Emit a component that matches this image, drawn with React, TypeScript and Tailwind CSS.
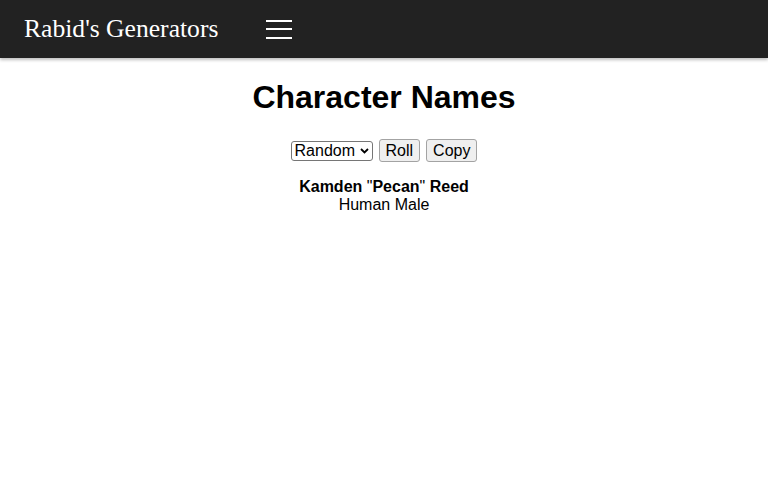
import { useState } from 'react'

export default function App() {
  const [race, setRace] = useState('Random')

  return (
    <div className="min-h-screen bg-white font-['Liberation_Sans',Arial,sans-serif] text-black">
      {/* Top bar */}
      <nav className="flex h-[58px] items-center bg-[#222222] px-6 shadow-[0_2px_3px_rgba(0,0,0,0.25)]">
        <span className="font-['Liberation_Serif','Times_New_Roman',serif] text-[25.6px] leading-none text-white">
          Rabid's Generators
        </span>
        <button className="ml-[48px] flex h-[19px] w-[26px] flex-col justify-between" aria-label="Menu">
          <span className="block h-[2px] w-full bg-white" />
          <span className="block h-[2px] w-full bg-white" />
          <span className="block h-[2px] w-full bg-white" />
        </button>
      </nav>

      <main className="flex flex-col items-center text-center">
        <h1 className="mt-[21px] text-[32px] font-bold leading-[37px]">Character Names</h1>

        <div className="mt-[23px] flex items-center gap-[6px] text-[16px]">
          <div className="relative">
            <select
              value={race}
              onChange={(e) => setRace(e.target.value)}
              className="block h-[20px] w-[82px] appearance-none rounded-[3px] border border-[#767676] bg-white pl-[3px] text-left text-[16px] leading-[18px]"
            >
              <option>Random</option>
              <option>Human</option>
              <option>Elf</option>
              <option>Dwarf</option>
            </select>
            <svg
              className="pointer-events-none absolute right-[4px] top-[7px]"
              width="9"
              height="6"
              viewBox="0 0 9 6"
              fill="none"
            >
              <path d="M1 1l3.5 3.5L8 1" stroke="#000" strokeWidth="1.8" />
            </svg>
          </div>
          <button className="h-[23px] rounded-[3px] border border-[#a3a3a3] bg-[#efefef] px-[6px] text-[16px] leading-[18px]">
            Roll
          </button>
          <button className="h-[23px] rounded-[3px] border border-[#a3a3a3] bg-[#efefef] px-[6px] text-[16px] leading-[18px]">
            Copy
          </button>
        </div>

        <div className="mt-[16px] text-[16px] leading-[18px]">
          <div>
            <b>Kamden</b> "<b>Pecan</b>" <b>Reed</b>
          </div>
          <div>Human Male</div>
        </div>
      </main>
    </div>
  )
}
